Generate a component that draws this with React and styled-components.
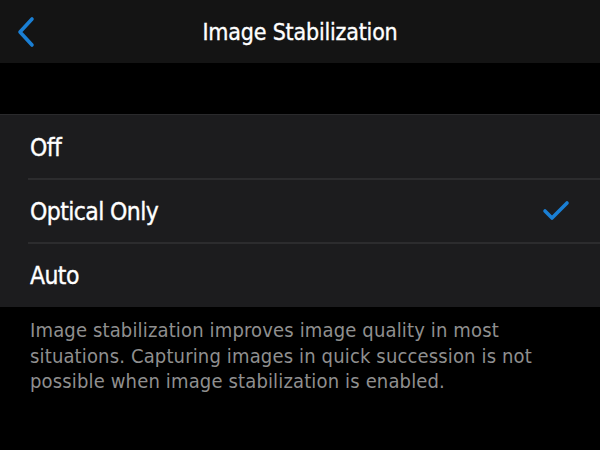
import React, { useState } from "react";
import styled, { createGlobalStyle } from "styled-components";

const GlobalStyle = createGlobalStyle`
  html, body {
    margin: 0;
    padding: 0;
    background: #000;
  }
  body {
    font-family: "DejaVu Sans Condensed", "Roboto", "Liberation Sans", sans-serif;
    -webkit-font-smoothing: antialiased;
  }
`;

const Screen = styled.div`
  width: 600px;
  height: 450px;
  background: #000;
  display: flex;
  flex-direction: column;
  overflow: hidden;
`;

const NavBar = styled.header`
  height: 63px;
  flex-shrink: 0;
  background: #141414;
  display: grid;
  grid-template-columns: 80px 1fr 80px;
  align-items: center;
`;

const BackButton = styled.button`
  background: none;
  border: 0;
  padding: 0 0 0 14px;
  height: 100%;
  display: flex;
  align-items: center;
  cursor: pointer;
`;

const Title = styled.h1`
  margin: 0;
  text-align: center;
  color: #fff;
  font-size: 23px;
  font-weight: 400;
  letter-spacing: -0.2px;
  -webkit-text-stroke: 0.35px #fff;
`;

const Spacer = styled.div`
  height: 51px;
  flex-shrink: 0;
`;

const List = styled.ul`
  list-style: none;
  margin: 0;
  padding: 0;
  background: #1c1c1e;
  border-top: 1px solid #2a2a2c;
`;

const Row = styled.li`
  height: 64px;
  padding: 0 30px;
  display: flex;
  align-items: center;
  position: relative;
  cursor: pointer;

  & + &::before {
    content: "";
    position: absolute;
    top: -1px;
    left: 28px;
    right: 0;
    height: 2px;
    background: #2c2c2e;
  }
`;

const Label = styled.span`
  flex: 1;
  color: #fff;
  font-size: 24.5px;
  font-weight: 400;
  letter-spacing: -0.6px;
  -webkit-text-stroke: 0.35px #fff;
`;

const Check = styled.span`
  display: flex;
  align-items: center;
`;

const Footnote = styled.p`
  margin: 0;
  padding: 11px 60px 0 30px;
  color: #8f8f8f;
  font-size: 20px;
  line-height: 25.5px;
  letter-spacing: 0.15px;
`;

const options = ["Off", "Optical Only", "Auto"];

export default function App() {
  const [selected, setSelected] = useState("Optical Only");

  return (
    <Screen>
      <GlobalStyle />
      <NavBar>
        <BackButton aria-label="Back">
          <svg width="22" height="32" viewBox="0 0 22 32">
            <path
              d="M18 3 L6 16 L18 29"
              fill="none"
              stroke="#1a7fd4"
              strokeWidth="3.6"
              strokeLinecap="round"
              strokeLinejoin="round"
            />
          </svg>
        </BackButton>
        <Title>Image Stabilization</Title>
        <div />
      </NavBar>
      <Spacer />
      <List>
        {options.map((opt) => (
          <Row key={opt} onClick={() => setSelected(opt)}>
            <Label>{opt}</Label>
            {selected === opt && (
              <Check>
                <svg width="28" height="24" viewBox="0 0 28 24">
                  <path
                    d="M3 12 L10 19 L25 4"
                    fill="none"
                    stroke="#1a7fd4"
                    strokeWidth="3.6"
                    strokeLinecap="round"
                    strokeLinejoin="round"
                  />
                </svg>
              </Check>
            )}
          </Row>
        ))}
      </List>
      <Footnote>
        Image stabilization improves image quality in most situations. Capturing
        images in quick succession is not possible when image stabilization is
        enabled.
      </Footnote>
    </Screen>
  );
}
